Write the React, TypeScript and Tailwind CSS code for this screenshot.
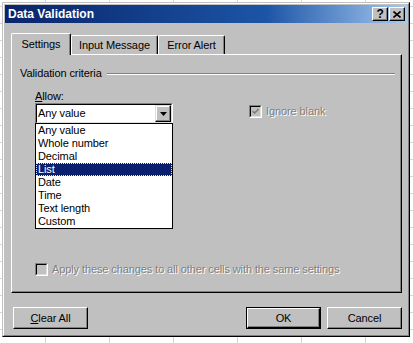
import React from "react";

const items = ["Any value", "Whole number", "Decimal", "List", "Date", "Time", "Text length", "Custom"];

export default function App() {
  return (
    <div className="h-[343px] w-[413px] overflow-hidden bg-white bg-[linear-gradient(to_right,#d6d6d6_1px,transparent_1px),linear-gradient(to_bottom,#d6d6d6_1px,transparent_1px)] bg-size-[64px_17px] bg-position-[45px_6px] pl-[2px] pt-[2px] text-[11px] leading-[13px] tracking-[-0.1px] text-black [font-family:'Liberation_Sans',Arial,sans-serif]">
      <div className="h-[335px] w-[408px] border border-b-black border-l-[#c0c0c0] border-r-black border-t-[#c0c0c0] bg-[#c0c0c0]">
        <div className="flex h-full flex-col border border-b-[#808080] border-l-white border-r-[#808080] border-t-white p-px">
          <TitleBar />
          <div className="flex-1 pl-[6px] pr-[5px] pt-[10px]">
            <div className="flex h-[21px] items-end">
              <Tab label="Settings" width="w-[60px]" active />
              <Tab label="Input Message" width="w-[87px]" />
              <Tab label="Error Alert" width="w-[67px]" />
            </div>
            <SettingsPanel />
            <div className="mt-[14px] flex pl-[2px]">
              <Button>
                <span className="underline">C</span>lear All
              </Button>
              <div className="flex-1" />
              <Button primary>OK</Button>
              <div className="w-[6px]" />
              <Button>Cancel</Button>
            </div>
          </div>
        </div>
      </div>
    </div>
  );
}

function TitleBar() {
  return (
    <div className="flex h-[18px] items-center bg-gradient-to-r from-[#0a246a] via-[#1c55a6] via-65% to-[#a6caf0] pl-[3px] pr-[2px]">
      <span className="flex-1 text-[12px] font-bold leading-[14px] tracking-normal text-white">Data Validation</span>
      <CaptionButton>
        <span className="text-[12px] font-bold leading-none">?</span>
      </CaptionButton>
      <div className="w-px" />
      <CaptionButton>
        <svg width="8" height="7" viewBox="0 0 8 7">
          <path d="M0.5 0.5 L7.5 6.5 M7.5 0.5 L0.5 6.5" stroke="black" strokeWidth="1.6" />
        </svg>
      </CaptionButton>
    </div>
  );
}

function CaptionButton({ children }: { children: React.ReactNode }) {
  return (
    <div className="h-[14px] w-[16px] border border-b-black border-l-white border-r-black border-t-white bg-[#c0c0c0] shadow-[inset_-1px_-1px_0_#808080]">
      <div className="flex h-full items-center justify-center">{children}</div>
    </div>
  );
}

function Tab({ label, width, active }: { label: string; width: string; active?: boolean }) {
  return (
    <div
      className={
        active
          ? `relative z-10 -mb-px flex h-[22px] items-center justify-center rounded-t-[2px] border-l border-r border-t border-l-white border-r-black border-t-white bg-[#c0c0c0] shadow-[inset_-1px_0_0_#808080] ${width}`
          : `flex h-[19px] items-center justify-center rounded-t-[2px] border-l border-r border-t border-l-white border-r-black border-t-white bg-[#c0c0c0] shadow-[inset_-1px_0_0_#808080] ${width}`
      }
    >
      {label}
    </div>
  );
}

function SettingsPanel() {
  return (
    <div className="h-[239px] border border-b-black border-l-white border-r-black border-t-white pl-[8px] pt-[12px] shadow-[inset_-1px_-1px_0_#808080]">
      <div className="flex h-[13px] items-center pr-[6px]">
        <span>Validation criteria</span>
        <div className="ml-[5px] h-[2px] flex-1 border-b border-t border-b-white border-t-[#808080]" />
      </div>
      <div className="ml-[15px] mt-[10px]">
        <span className="underline">A</span>llow:
      </div>
      <div className="ml-[15px] flex items-start">
        <div className="relative">
          <Combo />
          <div className="absolute left-0 top-[20px] z-20 w-[138px] border border-black bg-white">
            {items.map((item) => (
              <div
                key={item}
                className={
                  item === "List"
                    ? "h-[13px] border border-dotted border-[#f0f0a0] bg-[#0a1f6e] pl-[1px] leading-[11px] text-white"
                    : "h-[13px] pl-[2px]"
                }
              >
                {item}
              </div>
            ))}
          </div>
        </div>
        <div className="ml-[76px] mt-[2px]">
          <Checkbox label="Ignore blank" checked />
        </div>
      </div>
      <div className="ml-[15px] mt-[139px]">
        <Checkbox label="Apply these changes to all other cells with the same settings" />
      </div>
    </div>
  );
}

function Combo() {
  return (
    <div className="h-[21px] w-[138px] border border-b-white border-l-[#808080] border-r-white border-t-[#808080]">
      <div className="flex h-full border border-b-[#dfdfdf] border-l-black border-r-[#dfdfdf] border-t-black bg-white">
        <span className="flex-1 pl-px pt-[2px]">Any value</span>
        <div className="flex h-[17px] w-[16px] items-center justify-center border border-b-black border-l-[#dfdfdf] border-r-black border-t-[#dfdfdf] bg-[#c0c0c0] shadow-[inset_-1px_-1px_0_#808080,inset_1px_1px_0_#fff]">
          <svg width="7" height="4" viewBox="0 0 7 4">
            <path d="M0 0 H7 L3.5 4 Z" fill="black" />
          </svg>
        </div>
      </div>
    </div>
  );
}

function Checkbox({ label, checked }: { label: string; checked?: boolean }) {
  return (
    <div className="flex items-center">
      <div className="h-[13px] w-[13px] border border-b-white border-l-[#808080] border-r-white border-t-[#808080]">
        <div className="flex h-full items-center justify-center border border-b-[#dfdfdf] border-l-black border-r-[#dfdfdf] border-t-black bg-[#c0c0c0]">
          {checked && (
            <svg width="7" height="7" viewBox="0 0 7 7">
              <path d="M0.5 3 L2.5 5 L6.5 1" stroke="#808080" strokeWidth="1.6" fill="none" />
            </svg>
          )}
        </div>
      </div>
      <span className="ml-[4px] text-[#808080] [text-shadow:1px_1px_0_#fff]">{label}</span>
    </div>
  );
}

function Button({ children, primary }: { children: React.ReactNode; primary?: boolean }) {
  return (
    <div className={primary ? "h-[22px] w-[75px] border border-black" : "h-[22px] w-[75px]"}>
      <div className="flex h-full items-center justify-center border border-b-black border-l-white border-r-black border-t-white bg-[#c0c0c0] shadow-[inset_-1px_-1px_0_#808080]">
        <span>{children}</span>
      </div>
    </div>
  );
}
